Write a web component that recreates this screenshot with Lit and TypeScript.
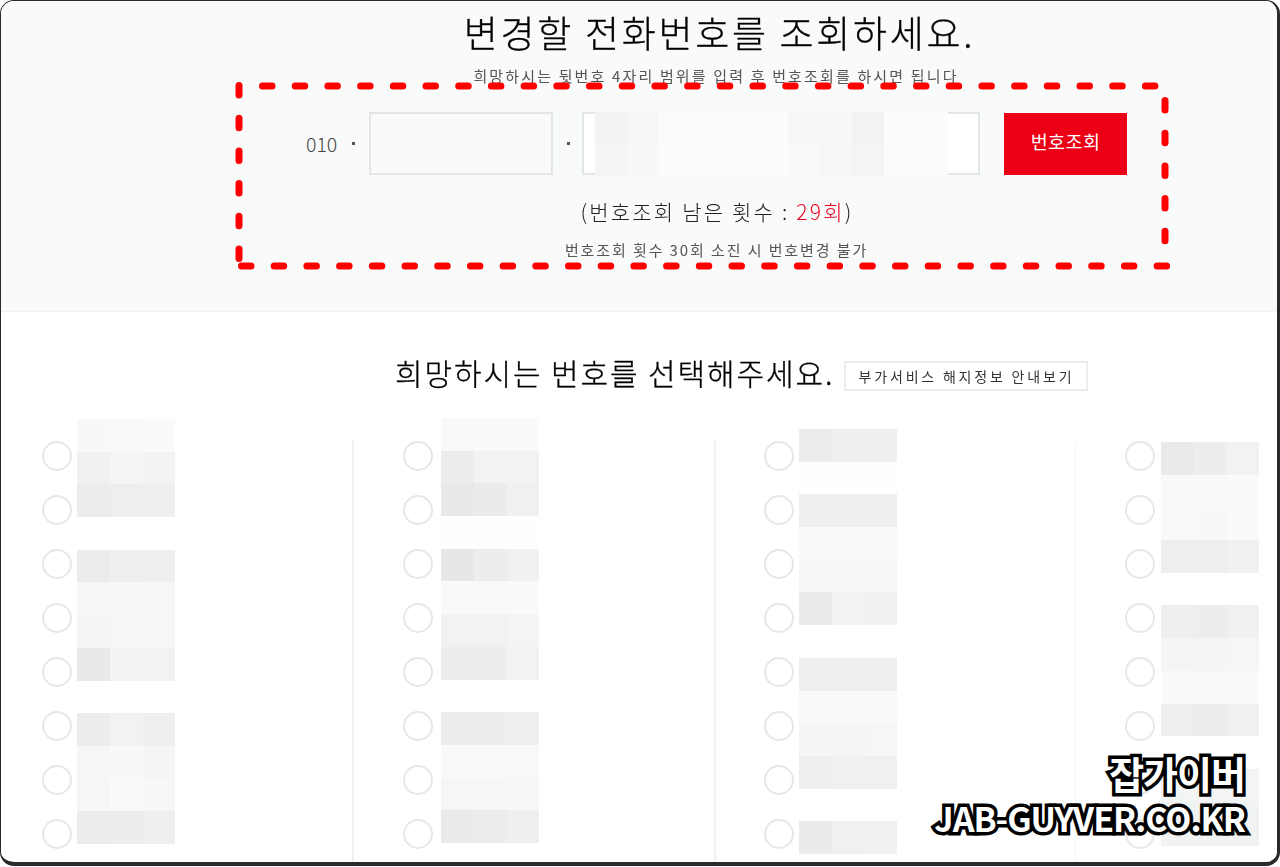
import { LitElement, html, css, svg } from "lit";
import { customElement } from "lit/decorators.js";

const shade = (v: string) => {
  const n = parseInt(v, 16);
  const g = Math.min(255, n + 1);
  return `rgb(${n},${g},${g})`;
};

// Mosaic rows per column: three grey values per row, "" for an empty row.
const COLUMNS: { cls: string; rows: string[] }[] = [
  {
    cls: "c1",
    rows: ["f7 f8 f9", "f0 f3 f2", "eb ed ee", "", "eb ee ee", "f6 f7 f6", "f4 f5 f5", "e8 f2 f1", "", "eb f1 ee", "f5 f7 f4", "f5 f8 f6", "eb ec ee"],
  },
  {
    cls: "c2",
    rows: ["f8 f8 f9", "ec f1 f1", "e8 ea ef", "fd fd fd", "e6 ec f0", "f8 f8 f9", "f1 f1 f3", "ec ec f1", "", "eb ec ed", "f8 f8 f8", "f5 f5 f6", "e9 eb ee"],
  },
  {
    cls: "c3",
    rows: ["eb ee ee", "fd fd fd", "ee ee ee", "f9 f9 f9", "f5 f5 f5", "e9 f1 f0", "", "ed ee ed", "f8 f9 f9", "f4 f4 f5", "ee ef ef", "", "ea ef f0"],
  },
  {
    cls: "c4",
    rows: ["e9 ec f1", "f8 f8 f9", "f8 f7 f9", "ed ed f0", "", "ee ec f0", "f4 f4 f5", "f9 f8 f9", "ed ec f0", "", "f3 f3 f3", "f0 f0 f1", "f1 f1 f1"],
  },
];

const INPUT_MOSAIC = [
  ["f2", "f6", "fb", "fb", "fb", "fb", "f6", "f6", "f1", "fa", "fb"],
  ["f3", "f7", "fb", "fb", "fb", "fb", "f8", "f6", "f3", "fa", "fb"],
];

@customElement("app-root")
export class AppRoot extends LitElement {
  static styles = css`
    :host {
      display: block;
      width: 1280px;
      height: 867px;
      background: #fff;
      font-family: "Noto Sans CJK KR", "Noto Sans", sans-serif;
      color: #222;
      position: relative;
      overflow: hidden;
    }
    .frame {
      box-sizing: border-box;
      width: 1280px;
      height: 866px;
      border: 1px solid #2a2a2a;
      border-right-width: 3px;
      border-bottom-width: 4px;
      border-radius: 14px;
      overflow: hidden;
      display: flex;
      flex-direction: column;
      background: #fff;
    }
    .top {
      box-sizing: border-box;
      height: 311px;
      background: #f9fafa;
      border-bottom: 1px solid #f0f1f1;
      display: flex;
      flex-direction: column;
      flex: none;
    }
    h1 {
      margin: 8px 0 0 161px;
      text-align: center;
      font-size: 37px;
      line-height: 46px;
      font-weight: 300;
      color: #000;
      letter-spacing: 2.7px;
      -webkit-text-stroke: 0.3px #000;
      filter: blur(0.25px);
    }
    .sub {
      margin: 11px 0 0 154px;
      text-align: center;
      font-size: 15px;
      line-height: 20px;
      color: #555;
      letter-spacing: 2.15px;
      filter: blur(0.45px);
      white-space: nowrap;
    }
    .form {
      display: flex;
      align-items: center;
      margin: 26px 0 0 305px;
      height: 63px;
    }
    .prefix {
      font-size: 19.5px;
      font-weight: 300;
      color: #444;
      width: 46px;
    }
    .dot {
      width: 3px;
      height: 3px;
      background: #555;
      flex: none;
    }
    .d1 {
      margin-right: 14px;
    }
    .d2 {
      margin: 0 12px 0 14px;
    }
    .field {
      box-sizing: border-box;
      height: 63px;
      border: 2px solid #e3e6e6;
      flex: none;
    }
    .f1 {
      width: 184px;
      background: #fafafa;
    }
    .f2 {
      width: 398px;
      background: #fff;
      position: relative;
    }
    .mosaic {
      position: absolute;
      left: 11px;
      top: -2px;
      display: grid;
      grid-template-columns: repeat(11, 32.1px);
      grid-auto-rows: 32px;
    }
    .go {
      box-sizing: border-box;
      width: 123px;
      height: 62px;
      margin-left: 24px;
      background: #ec0016;
      color: #fff;
      font-size: 18.5px;
      padding-bottom: 6px;
      display: flex;
      align-items: center;
      justify-content: center;
      letter-spacing: 0.4px;
      flex: none;
      font-weight: 400;
    }
    .status {
      margin: 21px 0 0 156px;
      text-align: center;
      font-size: 21px;
      line-height: 30px;
      color: #222;
      letter-spacing: 2.2px;
      font-weight: 300;
      filter: blur(0.2px);
    }
    .status b {
      font-weight: 300;
      color: #ee0022;
    }
    .note {
      margin: 14px 0 0 155px;
      text-align: center;
      font-size: 15px;
      line-height: 20px;
      color: #555;
      letter-spacing: 1.9px;
      filter: blur(0.45px);
    }
    .pick {
      flex: 1;
      display: flex;
      flex-direction: column;
      min-height: 0;
    }
    .head {
      display: flex;
      align-items: center;
      margin: 42px 0 0 394px;
      height: 36px;
    }
    h2 {
      margin: 0;
      font-size: 30px;
      line-height: 36px;
      font-weight: 300;
      color: #000;
      letter-spacing: 1.9px;
      white-space: nowrap;
      -webkit-text-stroke: 0.3px #000;
      filter: blur(0.25px);
    }
    .info {
      box-sizing: border-box;
      margin: 8px 0 0 10px;
      width: 244px;
      height: 30px;
      border: 2px solid #eceeee;
      font-size: 14px;
      color: #333;
      display: flex;
      align-items: center;
      justify-content: center;
      letter-spacing: 2.8px;
      white-space: nowrap;
      flex: none;
    }
    .info span {
      filter: blur(0.35px);
    }
    .cols {
      flex: 1;
      display: flex;
      margin-top: 51px;
      min-height: 0;
    }
    .col {
      box-sizing: border-box;
      display: flex;
      flex: none;
      align-items: flex-start;
    }
    .col.c1 {
      width: 353px;
      padding-left: 41px;
      border-right: 2px solid #f0f1f1;
      gap: 5px;
    }
    .col.c2 {
      width: 362px;
      padding-left: 49px;
      border-right: 2px solid #f0f1f1;
      gap: 8px;
    }
    .col.c3 {
      width: 360px;
      padding-left: 48px;
      border-right: 1px solid #f2f3f3;
      gap: 5px;
    }
    .col.c4 {
      width: 201px;
      padding-left: 49px;
      gap: 6px;
    }
    .radios {
      display: flex;
      flex-direction: column;
      gap: 24px;
      flex: none;
    }
    .radio {
      box-sizing: border-box;
      width: 30px;
      height: 30px;
      border-radius: 50%;
      border: 2px solid #e6e7e7;
      background: #fff;
    }
    .blocks {
      display: grid;
      grid-template-columns: repeat(3, 32.8px);
      grid-auto-rows: 32.7px;
      flex: none;
      overflow: hidden;
    }
    .c1 .blocks {
      margin-top: -22px;
    }
    .c2 .blocks {
      margin-top: -23px;
    }
    .c3 .blocks {
      margin-top: -12px;
    }
    .c4 .blocks {
      margin-top: 1px;
      max-height: 404px;
    }
    .gap {
      grid-column: 1 / -1;
    }
    .dashes {
      position: absolute;
      left: 0;
      top: 0;
      width: 1280px;
      height: 867px;
      pointer-events: none;
    }
    .dashes path {
      fill: none;
      stroke: #ff0000;
      stroke-width: 7;
      stroke-linecap: round;
      stroke-dasharray: 9.5 23.2;
    }
    .mark {
      position: absolute;
      right: 35px;
      top: 749px;
      display: flex;
      flex-direction: column;
      align-items: flex-end;
      color: #fff;
      font-weight: 700;
      -webkit-text-stroke: 7px #000;
      paint-order: stroke fill;
    }
    .mark .ko {
      font-size: 38px;
      line-height: 47px;
      letter-spacing: -1px;
    }
    .mark .en {
      font-size: 34px;
      line-height: 44px;
      letter-spacing: -1px;
    }
  `;

  render() {
    return html`
      <div class="frame">
        <section class="top">
          <h1>변경할 전화번호를 조회하세요.</h1>
          <div class="sub">희망하시는 뒷번호 4자리 범위를 입력 후 번호조회를 하시면 됩니다</div>
          <div class="form">
            <span class="prefix">010</span>
            <span class="dot d1"></span>
            <div class="field f1"></div>
            <span class="dot d2"></span>
            <div class="field f2">
              <div class="mosaic">
                ${INPUT_MOSAIC.flat().map(
                  (v) => html`<span style="background:${shade(v)}"></span>`
                )}
              </div>
            </div>
            <div class="go">번호조회</div>
          </div>
          <div class="status">(번호조회 남은 횟수 : <b>29회</b>)</div>
          <div class="note">번호조회 횟수 30회 소진 시 번호변경 불가</div>
        </section>
        <section class="pick">
          <div class="head">
            <h2>희망하시는 번호를 선택해주세요.</h2>
            <div class="info"><span>부가서비스 해지정보 안내보기</span></div>
          </div>
          <div class="cols">
            ${COLUMNS.map(
              (c) => html`
                <div class="col ${c.cls}">
                  <div class="radios">
                    ${Array.from({ length: 8 }, () => html`<span class="radio"></span>`)}
                  </div>
                  <div class="blocks">
                    ${c.rows.map((r) =>
                      r
                        ? r.split(" ").map((v) => html`<span style="background:${shade(v)}"></span>`)
                        : html`<span class="gap"></span>`
                    )}
                  </div>
                </div>
              `
            )}
          </div>
        </section>
      </div>
      <svg class="dashes" viewBox="0 0 1280 867">
        ${svg`<path d="M262.5 86H1165"></path>
        <path d="M1165 100.5V246"></path>
        <path d="M241.5 266H1168"></path>
        <path d="M239 85.5V262"></path>`}
      </svg>
      <div class="mark">
        <span class="ko">잡가이버</span>
        <span class="en">JAB-GUYVER.CO.KR</span>
      </div>
    `;
  }
}
